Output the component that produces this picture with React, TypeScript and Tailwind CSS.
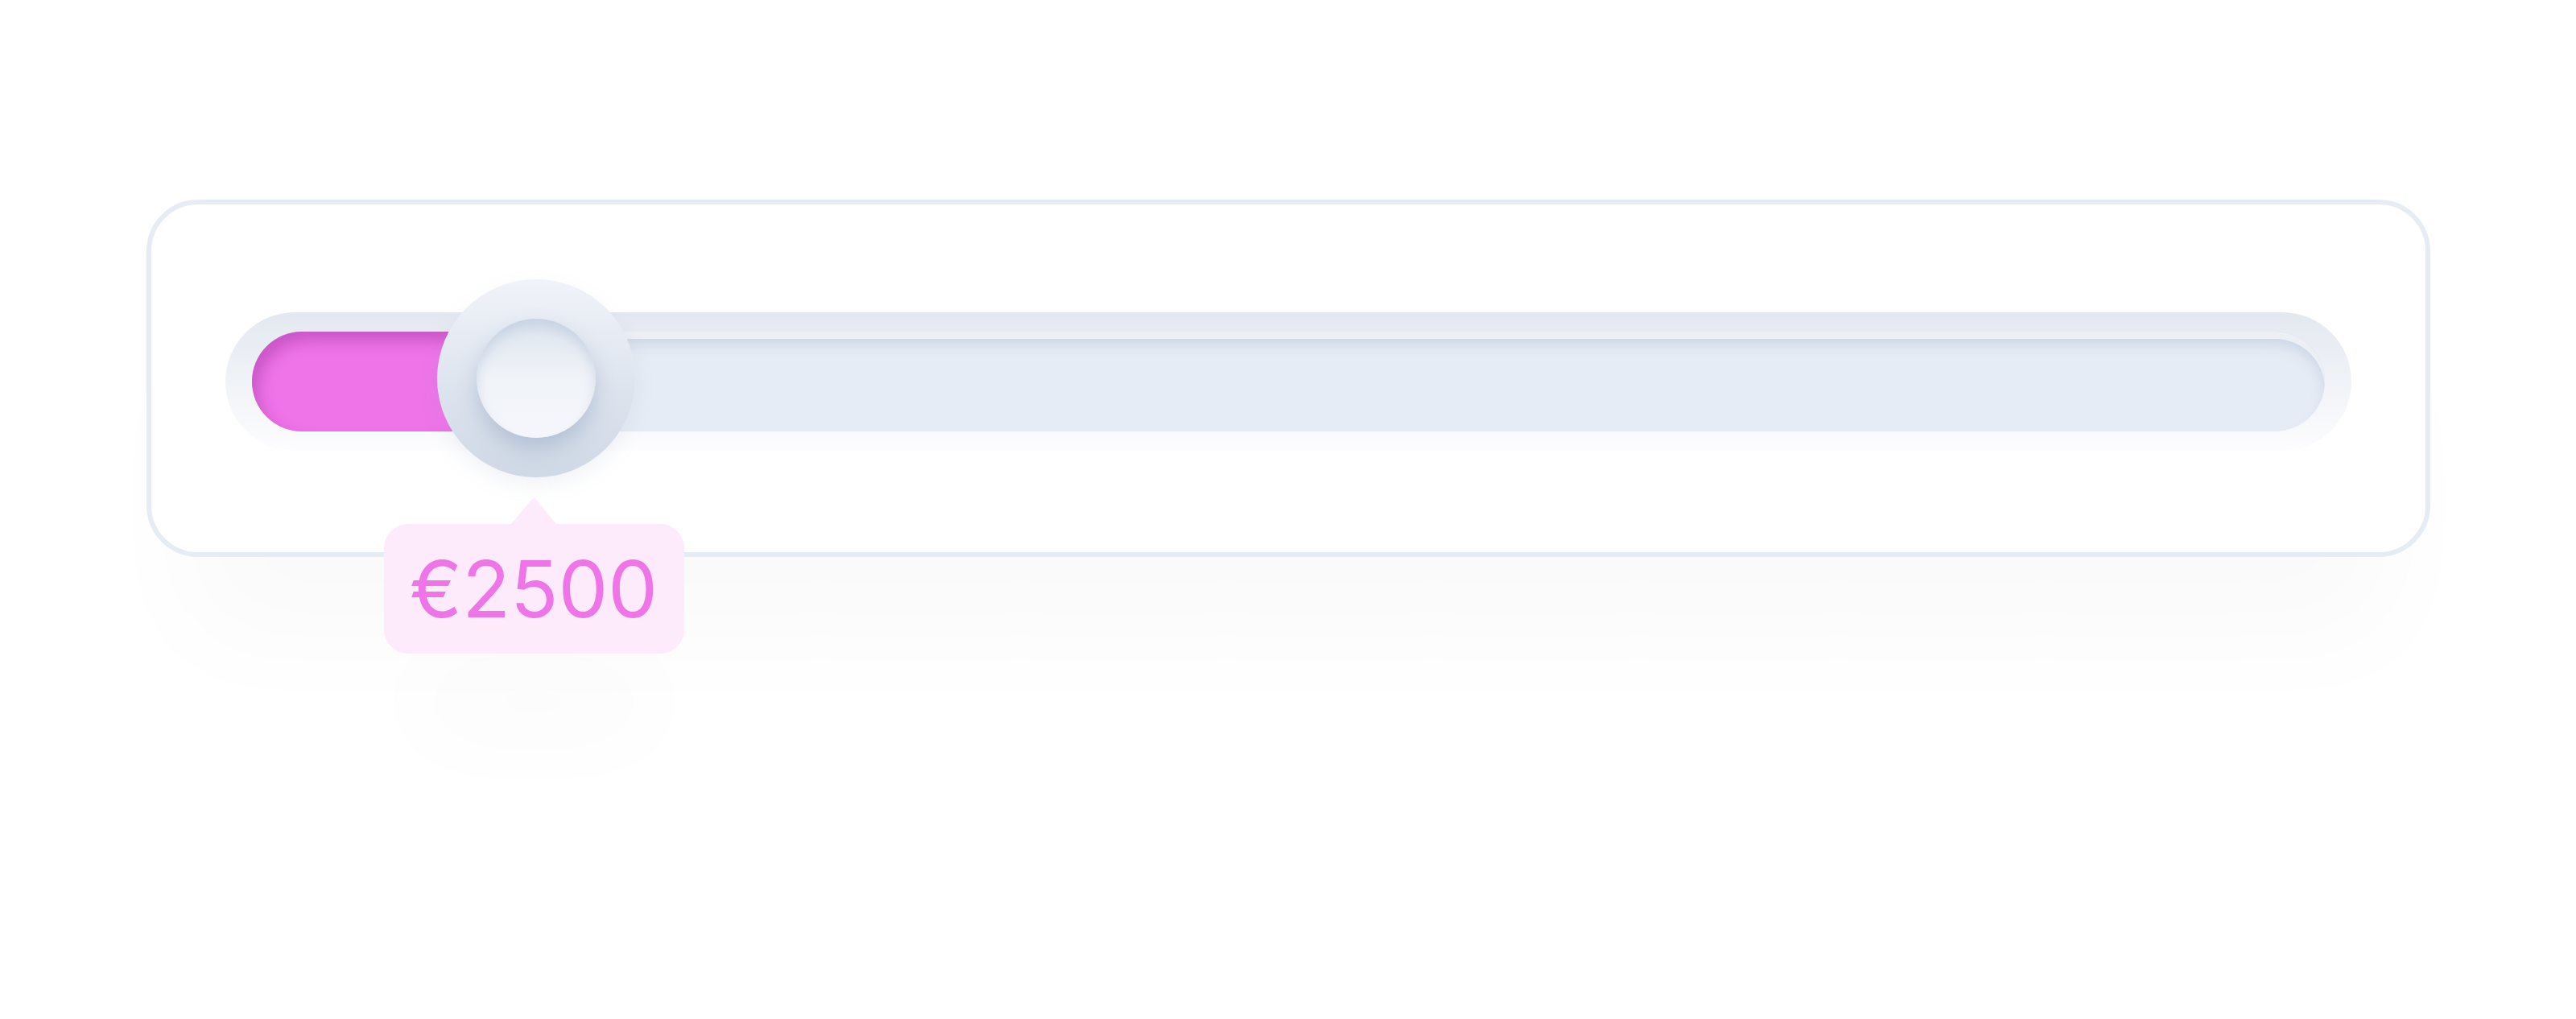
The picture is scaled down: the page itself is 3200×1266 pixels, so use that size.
import React from "react";

const PRICE = 2500;

const Knob = () => (
  <div className="absolute left-[230px] top-[-65px] flex h-[246px] w-[246px] items-center justify-center rounded-full bg-gradient-to-b from-[#f0f3f9] to-[#cfd8e5] shadow-[0_10px_24px_rgba(140,160,190,0.12)]">
    <div className="h-[148px] w-[148px] rounded-full bg-gradient-to-b from-[#dde4ee] via-[#f0f3f8] to-[#f5f7fb] shadow-[inset_0_10px_14px_rgba(175,190,212,0.45),0_14px_26px_rgba(140,160,190,0.45)]" />
  </div>
);

const Tooltip = ({ value }: { value: number }) => (
  <div className="absolute left-[164px] top-[206px] z-10 flex w-[373px] flex-col items-center">
    <svg width="56" height="33" viewBox="0 0 56 33" className="block">
      <path d="M0 33 L25 3 Q28 -0.5 31 3 L56 33 Z" fill="#fdebfc" />
    </svg>
    <div className="flex h-[161px] w-full items-center justify-center rounded-[30px] bg-[#fdebfc] shadow-[0_140px_120px_-40px_rgba(15,23,42,0.025)]">
      <span className="font-['Inter','Noto_Sans',sans-serif] text-[98px] leading-none text-[#ee74e8]">
        €{value}
      </span>
    </div>
  </div>
);

export default function App() {
  return (
    <div className="min-h-[1266px] w-full bg-white pt-[248px]">
      <div className="mx-auto w-[2837px] rounded-[64px] border-[6px] border-[#e6ecf4] bg-white px-[92px] pb-[126px] pt-[134px] shadow-[0_150px_140px_-50px_rgba(15,23,42,0.025)]">
        <div className="h-[172px] rounded-full bg-gradient-to-b from-[#e3e8f0] to-[#fdfdfe] px-[33px] py-6">
          <div className="relative h-[124px] rounded-full bg-[#e6ecf5] shadow-[inset_0_9px_0_#eceff4,inset_0_16px_16px_rgba(170,186,210,0.45)]">
            <div className="h-full w-[353px] rounded-l-full bg-[#ee74e8] shadow-[inset_8px_12px_18px_rgba(160,50,160,0.45)]" />
            <Knob />
            <Tooltip value={PRICE} />
          </div>
        </div>
      </div>
    </div>
  );
}
